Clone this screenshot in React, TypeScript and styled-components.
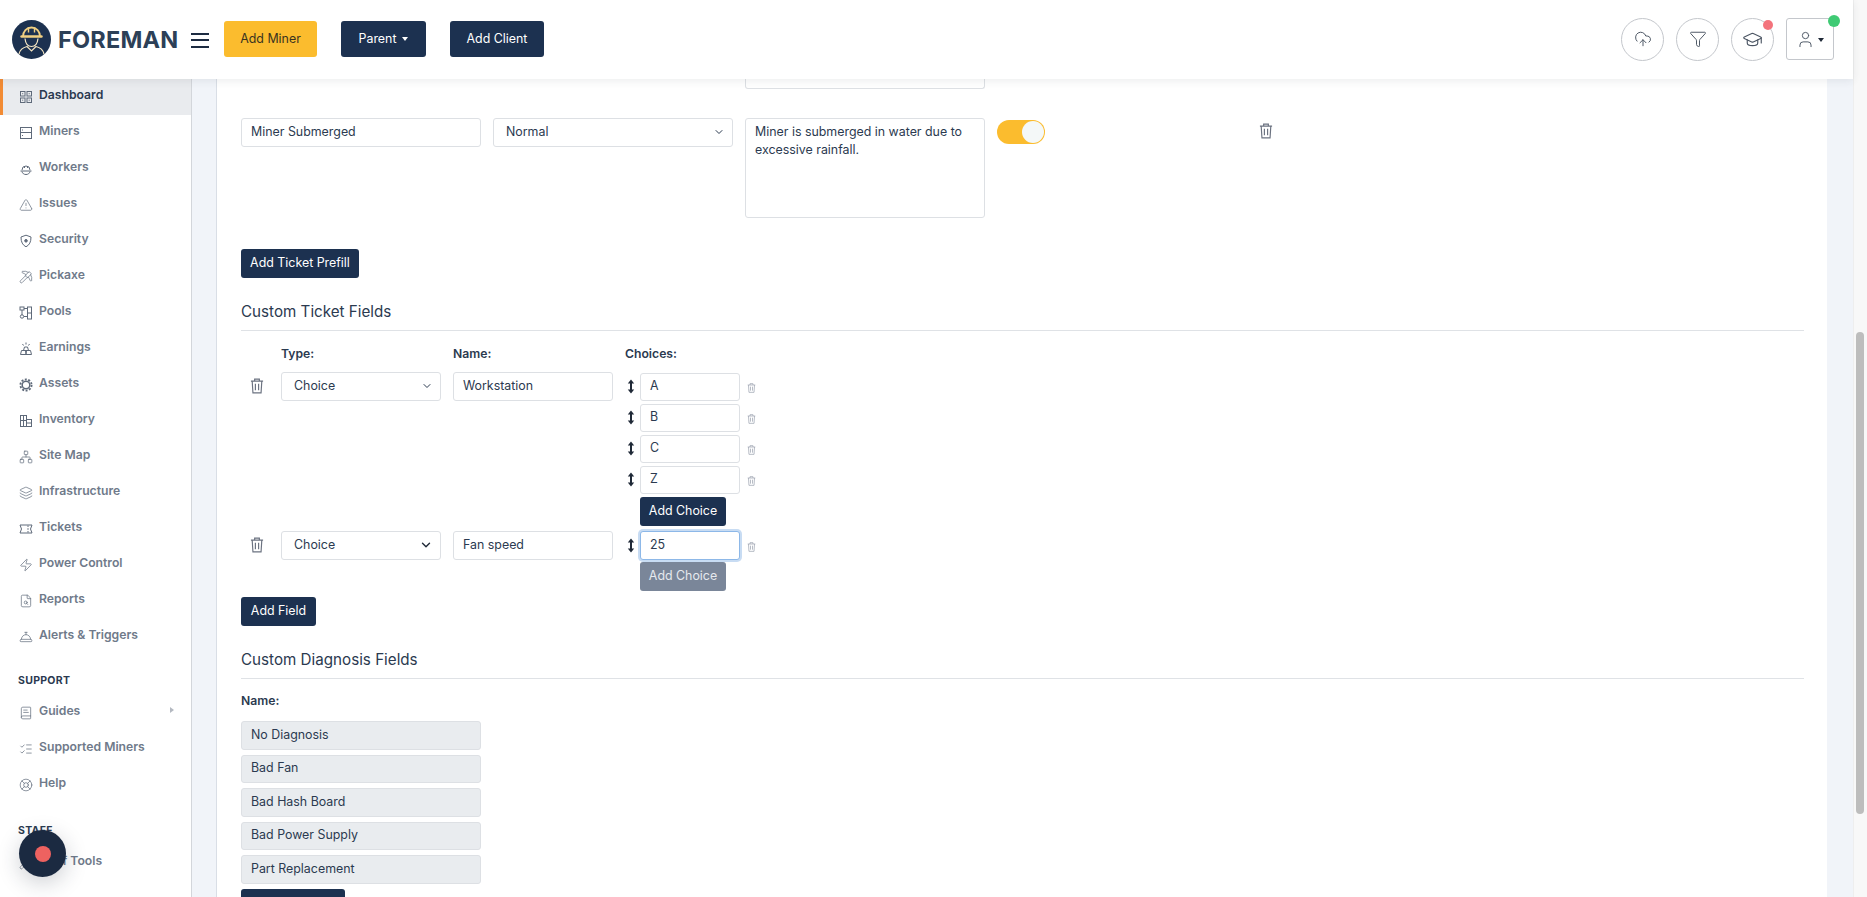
import React from "react";
import styled, { createGlobalStyle } from "styled-components";
import {
  BookText,
  ChevronDown,
  CloudUpload,
  ConciergeBell,
  FileSearch,
  Funnel,
  GraduationCap,
  Layers,
  LifeBuoy,
  ListChecks,
  Network,
  Pickaxe,
  TriangleAlert,
  User,
  Wrench,
  Zap,
} from "lucide-react";

const FONT = `Inter, "Noto Sans", sans-serif`;
const NAVY = "#1c3150";
const YELLOW = "#fbbc2e";

const GlobalStyle = createGlobalStyle`
  html, body {
    margin: 0;
    padding: 0;
    height: 100%;
    overflow: hidden;
    background: #f1f4f9;
    font-family: ${FONT};
    color: #2b3a50;
  }
  * { box-sizing: border-box; }
`;

const Page = styled.div`
  width: 1867px;
  height: 897px;
  display: grid;
  grid-template-columns: 1853px 14px;
  overflow: hidden;
`;

const Frame = styled.div`
  display: flex;
  flex-direction: column;
  height: 897px;
  min-width: 0;
`;

const Header = styled.header`
  position: relative;
  z-index: 5;
  flex: 0 0 79px;
  display: flex;
  align-items: center;
  background: #fff;
  box-shadow: 0 2px 8px rgba(40, 50, 70, 0.09);
  padding: 0 19px 1px 12px;
`;

const LogoWord = styled.span`
  font-size: 23.5px;
  font-weight: 700;
  color: #2c4057;
  letter-spacing: 0.2px;
  margin-left: 7px;
  width: 120px;
  white-space: nowrap;
`;

const Burger = styled.button`
  width: 18px;
  height: 15px;
  margin: 2px 15px 0 13px;
  padding: 0;
  border: none;
  background: linear-gradient(#1d2c42 0 2px, transparent 2px 6.5px, #1d2c42 6.5px 8.5px, transparent 8.5px 13px, #1d2c42 13px 15px);
`;

const HeaderButton = styled.button<{ $yellow?: boolean; $w: number }>`
  width: ${(p) => p.$w}px;
  height: 36px;
  margin-right: 24px;
  padding: 0 0 2px;
  border: none;
  border-radius: 3px;
  font: 400 12.4px ${FONT};
  background: ${(p) => (p.$yellow ? YELLOW : NAVY)};
  color: ${(p) => (p.$yellow ? "#3a3320" : "#fff")};
  display: flex;
  align-items: center;
  justify-content: center;
  gap: 6px;
`;

const Caret = styled.i<{ $dark?: boolean }>`
  display: inline-block;
  width: 0;
  height: 0;
  margin-top: 2px;
  border: 3px solid transparent;
  border-bottom: none;
  border-top: 4px solid ${(p) => (p.$dark ? "#1f2937" : "#fff")};
`;

const HeaderRight = styled.div`
  margin-left: auto;
  display: flex;
  align-items: center;
  gap: 12px;
`;

const RoundIcon = styled.div`
  position: relative;
  width: 43px;
  height: 43px;
  border: 1px solid #c4c7cc;
  border-radius: 50%;
  display: flex;
  align-items: center;
  justify-content: center;
  color: #4b5563;
`;

const Dot = styled.span<{ $c: string; $s: number; $top: number; $right: number }>`
  position: absolute;
  top: ${(p) => p.$top}px;
  right: ${(p) => p.$right}px;
  width: ${(p) => p.$s}px;
  height: ${(p) => p.$s}px;
  border-radius: 50%;
  background: ${(p) => p.$c};
`;

const UserButton = styled.div`
  position: relative;
  width: 48px;
  height: 42px;
  border: 1px solid #c4c7cc;
  border-radius: 3px;
  display: flex;
  align-items: center;
  justify-content: center;
  gap: 3px;
  color: #4b5563;
`;

const Body = styled.div`
  flex: 1;
  display: flex;
  min-height: 0;
`;

const Sidebar = styled.nav`
  position: relative;
  flex: 0 0 192px;
  background: #fff;
  border-right: 1px solid #d3d6db;
  overflow: hidden;
`;

const NavItem = styled.a<{ $active?: boolean }>`
  height: 36px;
  display: flex;
  align-items: center;
  padding: 0 0 6px 19px;
  gap: 6px;
  font-size: 12.2px;
  font-weight: 600;
  color: ${(p) => (p.$active ? "#2b3a50" : "#6f7a8a")};
  background: ${(p) => (p.$active ? "#e9ebee" : "transparent")};
  border-left: ${(p) => (p.$active ? `3px solid #f28b34` : "none")};
  padding-left: ${(p) => (p.$active ? 16 : 19)}px;
  svg { flex: none; position: relative; top: 3px; color: #5f6a7a; }
`;

const NavHeading = styled.div<{ $top: number }>`
  margin: ${(p) => p.$top}px 0 7px 18px;
  font-size: 10.5px;
  font-weight: 700;
  letter-spacing: 0.3px;
  line-height: 14px;
  color: #2b3a50;
`;

const NavArrow = styled.i`
  margin-left: auto;
  margin-right: 17px;
  width: 0;
  height: 0;
  border: 3px solid transparent;
  border-right: none;
  border-left: 4px solid #b4b9c1;
`;

const Recorder = styled.div`
  position: absolute;
  left: 19px;
  bottom: 20px;
  width: 47px;
  height: 47px;
  border-radius: 50%;
  background: #1b2a41;
  box-shadow: 0 6px 22px rgba(30, 40, 60, 0.22);
  display: flex;
  align-items: center;
  justify-content: center;
  &::after {
    content: "";
    width: 16px;
    height: 16px;
    border-radius: 50%;
    background: #ee6260;
  }
`;

const Main = styled.main`
  flex: 1;
  min-width: 0;
  padding: 0 26px 0 24px;
  overflow: hidden;
`;

const Card = styled.section`
  background: #fff;
  border-left: 1px solid #d9dee6;
  height: 100%;
  padding: 0 23px 0 24px;
  overflow: hidden;
`;

const ClippedBox = styled.div`
  width: 240px;
  height: 10px;
  margin-left: 504px;
  border: 1px solid #dde0e4;
  border-top: none;
  border-radius: 0 0 3px 3px;
`;

const PrefillRow = styled.div`
  position: relative;
  margin-top: 29px;
  display: grid;
  grid-template-columns: 240px 240px 240px 48px;
  column-gap: 12px;
  align-items: start;
  height: 131px;
`;

const fieldCss = `
  height: 29px;
  border: 1px solid #dde0e4;
  border-radius: 3px;
  background: #fff;
  font: 400 12.4px ${FONT};
  color: #2b3a50;
  display: flex;
  align-items: center;
  padding: 0 9px 2px;
`;

const Field = styled.div`
  ${fieldCss}
`;

const SelectBox = styled.div`
  ${fieldCss}
  justify-content: space-between;
  padding-left: 12px;
  padding-right: 7px;
`;

const TextArea = styled.div`
  ${fieldCss}
  display: block;
  height: 100px;
  padding: 4px 9px;
  line-height: 18px;
`;

const ToggleTrack = styled.div`
  position: relative;
  width: 48px;
  height: 24px;
  margin-top: 2px;
  border-radius: 12px;
  background: ${YELLOW};
  &::after {
    content: "";
    position: absolute;
    right: 1px;
    top: 1px;
    width: 22px;
    height: 22px;
    border-radius: 50%;
    background: #f4f8f8;
  }
`;

const RowTrash = styled.div`
  position: absolute;
  left: 1018px;
  top: 5px;
  color: #6b7280;
  display: flex;
`;

const NavyButton = styled.button<{ $w: number; $muted?: boolean }>`
  display: block;
  width: ${(p) => p.$w}px;
  height: 29px;
  padding: 0 0 2px;
  border: none;
  border-radius: 3px;
  background: ${(p) => (p.$muted ? "#7a8699" : NAVY)};
  color: ${(p) => (p.$muted ? "#e6e9ee" : "#fff")};
  font: 400 12.4px ${FONT};
`;

const AddFieldButton = styled(NavyButton)`
  margin-top: 6px;
`;

const SectionTitle = styled.h3`
  margin: 24px 0 0;
  height: 29px;
  padding-bottom: 8px;
  font-size: 15.2px;
  line-height: 20px;
  font-weight: 400;
  color: #2b3a50;
  border-bottom: 1px solid #dfe2e6;
`;

const FieldLabel = styled.div`
  font-size: 12.2px;
  line-height: 16px;
  font-weight: 600;
  color: #2b3a50;
`;

const NameLabel = styled(FieldLabel)`
  margin-top: 14px;
`;

const CustomGrid = styled.div`
  display: grid;
  grid-template-columns: 28px 160px 160px 1fr;
  column-gap: 12px;
`;

const LabelRow = styled(CustomGrid)`
  margin: 15px 0 10px;
`;

const FieldRow = styled(CustomGrid)<{ $top: number }>`
  margin-top: ${(p) => p.$top}px;
  align-items: start;
`;

const DeleteCell = styled.div`
  padding: 6px 0 0 9px;
  color: #6b7280;
`;

const ChoiceCol = styled.div`
  display: flex;
  flex-direction: column;
  margin-top: -1px;
`;

const ChoiceRow = styled.div`
  display: flex;
  align-items: center;
  height: 31px;
  color: #1f2937;
`;

const GripSlot = styled.div`
  width: 12px;
  margin-right: 3px;
  display: flex;
  justify-content: center;
`;

const ChoiceInput = styled.div<{ $focus?: boolean }>`
  ${fieldCss}
  width: 100px;
  height: 28px;
  margin-right: 7px;
  ${(p) => (p.$focus ? `height: 29px; border: 1px solid #8db8e8; box-shadow: 0 0 0 2px #c8dcf3;` : "")}
`;

const SmallTrash = styled.div`
  display: flex;
  margin-top: 3px;
  color: #9ca3af;
`;

const ChoiceButton = styled.div<{ $top: number }>`
  margin: ${(p) => p.$top}px 0 0 15px;
`;

const DiagnosisList = styled.div`
  display: flex;
  flex-direction: column;
  gap: 5px;
  margin-top: 12px;
  width: 240px;
`;

const ReadOnly = styled(Field)`
  background: #e9ecef;
  height: 28.5px;
`;

const ScrollTrack = styled.div`
  background: #f8f8f8;
  border-left: 1px solid #eeeeee;
  padding: 332px 3px 0 2px;
`;

const ScrollThumb = styled.div`
  height: 482px;
  border-radius: 4px;
  background: #bdbdbd;
`;

const Logo = () => (
  <svg width="39" height="39" viewBox="0 0 39 39" fill="none">
    <circle cx="19.5" cy="19.5" r="19.5" fill="#1c3150" />
    <path d="M11 16.500c0-5 3.500-9 8.500-9s8.500 4 8.500 9" stroke="#f0cf82" strokeWidth="1.8" />
    <path d="M16.500 7.500v5M22.500 7.500v5" stroke="#f0cf82" strokeWidth="1.400" />
    <path d="M9.500 16.500h20" stroke="#f0cf82" strokeWidth="2.400" strokeLinecap="round" />
    <path d="M13 18.500c.5 5 3 8 6.500 8s6-3 6.500-8" stroke="#f5e6c3" strokeWidth="1.200" />
    <path d="M7 34c1-4.500 4-6.500 8-7.500l4.500 4.500 4.500-4.500c4 1 7 3 8 7.500" stroke="#f5e6c3" strokeWidth="1.200" />
  </svg>
);

type GlyphProps = { children: React.ReactNode };

const Glyph = ({ children }: GlyphProps) => (
  <svg width="14" height="14" viewBox="0 0 14 14" fill="none" stroke="currentColor" strokeWidth="1">
    {children}
  </svg>
);

const TrashIcon = ({ w, h }: { w: number; h: number }) => (
  <svg width={w} height={h} viewBox="0 0 13 15" fill="none" stroke="currentColor" strokeWidth="1.100">
    <path d="M.8 3h11.400M4.300 3V1h4.400v2M2 3l.7 11h7.600L11 3M5 5.500v6M8 5.500v6" />
  </svg>
);

const GripIcon = () => (
  <svg width="10" height="15" viewBox="0 0 10 15" fill="#1f2937">
    <path d="M5 .5 8.200 4.500H6v6h2.200L5 14.500 1.800 10.500H4v-6H1.800z" />
  </svg>
);

const sideIcon = { size: 14, strokeWidth: 1.2 };

const mainNav: [string, React.ReactNode][] = [
  ["Miners", <Glyph><rect x="1.500" y="1.500" width="11" height="5" /><rect x="1.500" y="6.500" width="11" height="6" /><path d="M3 4h1M3 9.500h1" /></Glyph>],
  ["Workers", <Glyph><path d="M3 8a4 4 0 0 1 8 0M1.500 9h11M3 9.500c.4 2 2 3 4 3s3.600-1 4-3M5.500 4.300V6M8.500 4.300V6" /></Glyph>],
  ["Issues", <TriangleAlert {...sideIcon} />],
  ["Security", <Glyph><path d="M7 1.200 12 3c0 5-1.500 8-5 9.800C3.500 11 2 8 2 3z" /><circle cx="7" cy="6.800" r="1.300" fill="currentColor" /></Glyph>],
  ["Pickaxe", <Pickaxe {...sideIcon} />],
  ["Pools", <Glyph><rect x="1" y="1" width="4" height="3" /><circle cx="3" cy="10.500" r="1.700" /><path d="M3 4v5M5 2.500h3M5 10.500h3" /><rect x="8.500" y="1" width="4" height="12" /><path d="M8.500 7h4" /></Glyph>],
  ["Earnings", <Glyph><path d="M5.500 5h3l1 3.500h-5zM2.500 8.500h4l.5 4H1.500zM7.500 8.500h4l1 4H7z" /><path d="M7 .5v2M3.500 2 4.500 3.500M10.500 2 9.500 3.500" /></Glyph>],
  ["Assets", <Glyph><circle cx="7" cy="7" r="3.800" strokeWidth="1.500" /><circle cx="7" cy="7" r="5.600" strokeWidth="1.800" strokeDasharray="2 1.500" /></Glyph>],
  ["Inventory", <Glyph><rect x="1.500" y="1.500" width="6" height="11" /><path d="M1.500 6.500h6M4.500 1.500v5M4.500 6.500v6" /><rect x="7.500" y="5.500" width="5" height="7" /><path d="M7.500 9h5" /></Glyph>],
  ["Site Map", <Network {...sideIcon} />],
  ["Infrastructure", <Layers {...sideIcon} />],
  ["Tickets", <Glyph><path d="M1 3h12l-1.500 4L13 11H1l1.500-4z" /><path d="M9 3.500v1.500M9 6.200v1.600M9 9v1.500" /></Glyph>],
  ["Power Control", <Zap {...sideIcon} />],
  ["Reports", <FileSearch {...sideIcon} />],
  ["Alerts & Triggers", <ConciergeBell {...sideIcon} />],
];

const diagnoses = ["No Diagnosis", "Bad Fan", "Bad Hash Board", "Bad Power Supply", "Part Replacement"];

const Choice = ({ value, focus }: { value: string; focus?: boolean }) => (
  <ChoiceRow>
    <GripSlot>
      <GripIcon />
    </GripSlot>
    <ChoiceInput $focus={focus}>{value}</ChoiceInput>
    <SmallTrash>
      <TrashIcon w={9} h={10} />
    </SmallTrash>
  </ChoiceRow>
);

const App = () => (
  <>
    <GlobalStyle />
    <Page>
      <Frame>
        <Header>
          <Logo />
          <LogoWord>FOREMAN</LogoWord>
          <Burger aria-label="menu" />
          <HeaderButton $yellow $w={93}>Add Miner</HeaderButton>
          <HeaderButton $w={85}>
            Parent <Caret />
          </HeaderButton>
          <HeaderButton $w={94}>Add Client</HeaderButton>
          <HeaderRight>
            <RoundIcon>
              <CloudUpload size={18} strokeWidth={1.3} />
            </RoundIcon>
            <RoundIcon>
              <Funnel size={18} strokeWidth={1.3} />
            </RoundIcon>
            <RoundIcon>
              <GraduationCap size={21} strokeWidth={1.3} />
              <Dot $c="#f3737c" $s={10} $top={1} $right={0} />
            </RoundIcon>
            <UserButton>
              <User size={19} strokeWidth={1.2} />
              <Caret $dark />
              <Dot $c="#3fca74" $s={12} $top={-4} $right={-7} />
            </UserButton>
          </HeaderRight>
        </Header>
        <Body>
          <Sidebar>
            <NavItem $active>
              <Glyph>
                <rect x="1.500" y="1.500" width="4.500" height="4.500" />
                <rect x="8" y="1.500" width="4.500" height="4.500" />
                <rect x="1.500" y="8" width="4.500" height="4.500" />
                <rect x="8" y="8" width="4.500" height="4.500" />
                <path d="M3.200 3.700h1M9.700 3.700h1M3.200 10.200h1M9.700 10.200h1" />
              </Glyph>
              Dashboard
            </NavItem>
            {mainNav.map(([label, icon]) => (
              <NavItem key={label}>
                {icon}
                {label}
              </NavItem>
            ))}
            <NavHeading $top={19}>SUPPORT</NavHeading>
            <NavItem>
              <BookText {...sideIcon} />
              Guides
              <NavArrow />
            </NavItem>
            <NavItem>
              <ListChecks {...sideIcon} />
              Supported Miners
            </NavItem>
            <NavItem>
              <LifeBuoy {...sideIcon} />
              Help
            </NavItem>
            <NavHeading $top={21}>STAFF</NavHeading>
            <NavItem>
              <Wrench {...sideIcon} />
              Staff Tools
            </NavItem>
            <Recorder />
          </Sidebar>
          <Main>
            <Card>
              <ClippedBox />
              <PrefillRow>
                <Field>Miner Submerged</Field>
                <SelectBox>
                  Normal
                  <ChevronDown size={12} strokeWidth={2} />
                </SelectBox>
                <TextArea>Miner is submerged in water due to excessive rainfall.</TextArea>
                <ToggleTrack />
                <RowTrash>
                  <TrashIcon w={14} h={16} />
                </RowTrash>
              </PrefillRow>
              <NavyButton $w={118}>Add Ticket Prefill</NavyButton>
              <SectionTitle>Custom Ticket Fields</SectionTitle>
              <LabelRow>
                <span />
                <FieldLabel>Type:</FieldLabel>
                <FieldLabel>Name:</FieldLabel>
                <FieldLabel>Choices:</FieldLabel>
              </LabelRow>
              <FieldRow $top={0}>
                <DeleteCell>
                  <TrashIcon w={14} h={16} />
                </DeleteCell>
                <SelectBox>
                  Choice
                  <ChevronDown size={12} strokeWidth={2} />
                </SelectBox>
                <Field>Workstation</Field>
                <ChoiceCol>
                  <Choice value="A" />
                  <Choice value="B" />
                  <Choice value="C" />
                  <Choice value="Z" />
                  <ChoiceButton $top={2}>
                    <NavyButton $w={86}>Add Choice</NavyButton>
                  </ChoiceButton>
                </ChoiceCol>
              </FieldRow>
              <FieldRow $top={5}>
                <DeleteCell>
                  <TrashIcon w={14} h={16} />
                </DeleteCell>
                <SelectBox>
                  Choice
                  <ChevronDown size={14} strokeWidth={2.4} color="#1f2937" />
                </SelectBox>
                <Field>Fan speed</Field>
                <ChoiceCol>
                  <Choice value="25" focus />
                  <ChoiceButton $top={1}>
                    <NavyButton $w={86} $muted>Add Choice</NavyButton>
                  </ChoiceButton>
                </ChoiceCol>
              </FieldRow>
              <AddFieldButton $w={75}>Add Field</AddFieldButton>
              <SectionTitle>Custom Diagnosis Fields</SectionTitle>
              <NameLabel>Name:</NameLabel>
              <DiagnosisList>
                {diagnoses.map((d) => (
                  <ReadOnly key={d}>{d}</ReadOnly>
                ))}
                <NavyButton $w={104} aria-label="Add" />
              </DiagnosisList>
            </Card>
          </Main>
        </Body>
      </Frame>
      <ScrollTrack>
        <ScrollThumb />
      </ScrollTrack>
    </Page>
  </>
);

export default App;
